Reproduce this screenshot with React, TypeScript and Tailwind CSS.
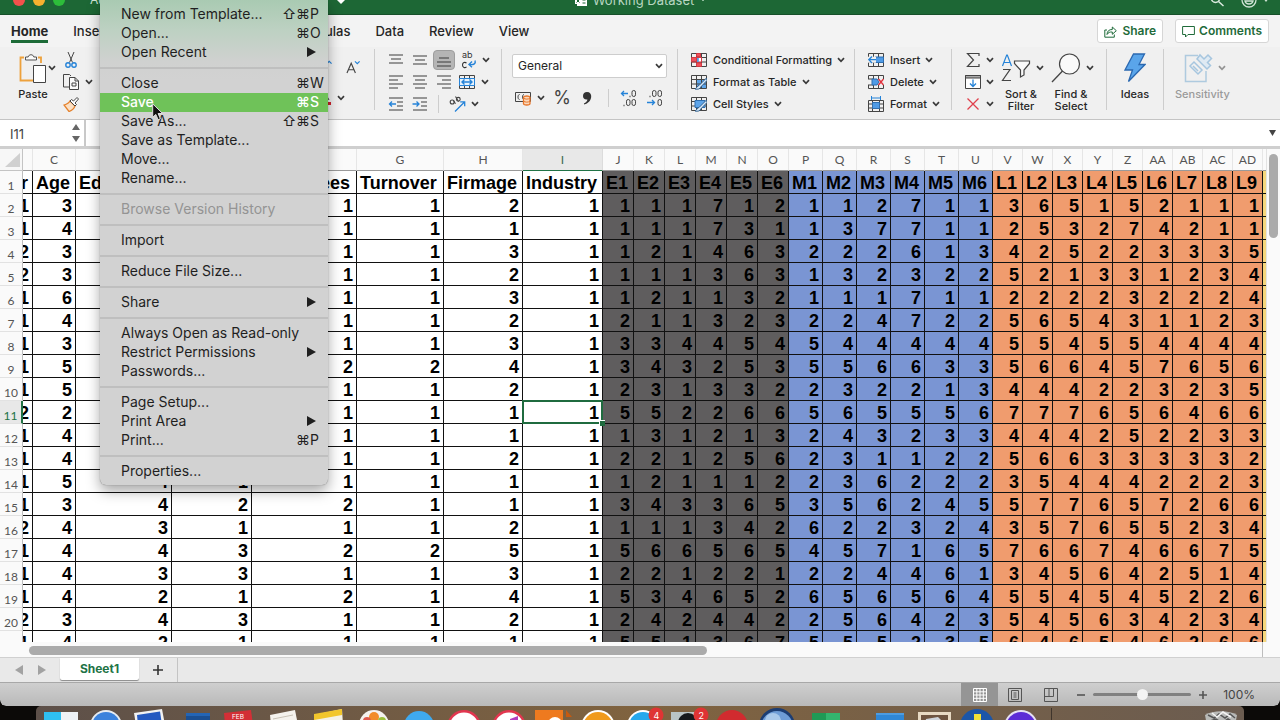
import type { ReactNode } from 'react';

/* ---------- data ---------- */

type Column = { id: string; title: string; width: string; fill: string };

const WHITE = 'bg-white';
const GRAY = 'bg-[#5f5d5e]';
const BLUE = 'bg-[#7a95d3]';
const ORANGE = 'bg-[#f09c6e]';

const columns: Column[] = [
  { id: 'B', title: 'r', width: 'w-[10px]', fill: WHITE },
  { id: 'C', title: 'Age', width: 'w-[43px]', fill: WHITE },
  { id: 'D', title: 'Education', width: 'w-[96px]', fill: WHITE },
  { id: 'E', title: '', width: 'w-[80px]', fill: WHITE },
  { id: 'F', title: 'Employees', width: 'w-[105px]', fill: WHITE },
  { id: 'G', title: 'Turnover', width: 'w-[87px]', fill: WHITE },
  { id: 'H', title: 'Firmage', width: 'w-[79px]', fill: WHITE },
  { id: 'I', title: 'Industry', width: 'w-[80px]', fill: WHITE },
  { id: 'J', title: 'E1', width: 'w-[31px]', fill: GRAY },
  { id: 'K', title: 'E2', width: 'w-[31px]', fill: GRAY },
  { id: 'L', title: 'E3', width: 'w-[31px]', fill: GRAY },
  { id: 'M', title: 'E4', width: 'w-[31px]', fill: GRAY },
  { id: 'N', title: 'E5', width: 'w-[31px]', fill: GRAY },
  { id: 'O', title: 'E6', width: 'w-[31px]', fill: GRAY },
  { id: 'P', title: 'M1', width: 'w-[34px]', fill: BLUE },
  { id: 'Q', title: 'M2', width: 'w-[34px]', fill: BLUE },
  { id: 'R', title: 'M3', width: 'w-[34px]', fill: BLUE },
  { id: 'S', title: 'M4', width: 'w-[34px]', fill: BLUE },
  { id: 'T', title: 'M5', width: 'w-[34px]', fill: BLUE },
  { id: 'U', title: 'M6', width: 'w-[34px]', fill: BLUE },
  { id: 'V', title: 'L1', width: 'w-[30px]', fill: ORANGE },
  { id: 'W', title: 'L2', width: 'w-[30px]', fill: ORANGE },
  { id: 'X', title: 'L3', width: 'w-[30px]', fill: ORANGE },
  { id: 'Y', title: 'L4', width: 'w-[30px]', fill: ORANGE },
  { id: 'Z', title: 'L5', width: 'w-[30px]', fill: ORANGE },
  { id: 'AA', title: 'L6', width: 'w-[30px]', fill: ORANGE },
  { id: 'AB', title: 'L7', width: 'w-[30px]', fill: ORANGE },
  { id: 'AC', title: 'L8', width: 'w-[30px]', fill: ORANGE },
  { id: 'AD', title: 'L9', width: 'w-[30px]', fill: ORANGE },
  { id: '', title: '', width: 'w-[30px]', fill: 'bg-[#f5d77c]' },
];

/* One string per row, columns B to AD; a dot is an empty cell. */
const rows: string[] = [
  '13..1121 111712 112711 365152111',
  '14..1111 111731 137711 253274211',
  '23..1131 121463 222613 425223335',
  '23..1121 111363 132322 521331234',
  '16..1131 121132 111711 222232224',
  '14..1121 211323 224722 565431123',
  '13..1131 334454 544444 554554444',
  '15..2241 343253 556633 566457656',
  '15..1121 231332 232213 444223235',
  '22..1111 552266 565556 777656466',
  '14..1111 131213 243233 444252233',
  '14..1121 221256 231122 566333332',
  '15411111 121112 236222 354442223',
  '13422111 343365 356245 577657266',
  '24311121 111342 622324 357655234',
  '14432251 566565 457165 766746675',
  '14331131 221221 224461 345642514',
  '14212141 534652 656564 554545226',
  '23431121 242442 256423 545634234',
  '14211111 551367 555235 646546266',
];

/* ---------- small pieces ---------- */

function Chevron({ className = '' }: { className?: string }) {
  return (
    <svg viewBox="0 0 8 6" className={`h-[6px] w-[8px] shrink-0 ${className}`} fill="none" stroke="#3a3a3a" strokeWidth="1.7">
      <path d="M1 1.200 4 4.300l3-3.100" />
    </svg>
  );
}

function Icon({ children, className = 'h-4 w-4', box = '0 0 16 16' }: { children: ReactNode; className?: string; box?: string }) {
  return (
    <svg viewBox={box} className={`shrink-0 ${className}`} fill="none" stroke="#444" strokeWidth="1">
      {children}
    </svg>
  );
}

const Divider = () => <div className="h-[61px] w-px shrink-0 bg-[#cdcdcd]" />;

function Lines({ label, d, active }: { label: string; d: string; active?: boolean }) {
  return (
    <button aria-label={label} className={`flex h-5 w-[22px] items-center justify-center ${active ? 'rounded-sm border border-[#9d9d9d] bg-[#b5b5b5]' : ''}`}>
      <Icon>
        <path d={d} stroke="#3c3c3c" strokeWidth="1.2" />
      </Icon>
    </button>
  );
}

function Tool({ icon, label }: { icon: ReactNode; label: string }) {
  return (
    <button className="flex h-[22px] items-center text-[11px] leading-4 font-medium text-[#262626]">
      {icon}
      <span className="mr-[5px] ml-[6px] whitespace-nowrap">{label}</span>
      <Chevron />
    </button>
  );
}

/* ---------- ribbon icons ---------- */

const grid = 'M.5 1.5h15v13h-15zM.5 5.5h15M.5 10h15M5.5 1.5v13M10.5 1.5v13';

const ConditionalIcon = () => (
  <Icon>
    <path d="M5.5 1.5h5v4h-5zM.5 5.5h5V10h-5zM5.5 10h5v4.5h-5z" fill="#f0505a" stroke="none" />
    <path d={grid} />
    <path d="M5.5 5.5h5V10h-5z" fill="#fff" stroke="#d43b45" />
    <path d="M5.5 6h2.3v4H5.5z" fill="#4f9be6" stroke="none" />
    <path d="M.5 5.500h5v4.500h-5zM5.500 1.500h4v3h-4zM5.500 11h5v3.500h-5z" stroke="#d43b45" />
  </Icon>
);
const FormatTableIcon = () => (
  <Icon>
    <path d="M5.500 5.500h10v9h-10z" fill="#5ea5ea" stroke="none" />
    <path d={grid} />
    <path d="M15.500 4 8 11.500c-2 .4-2 2.500-4 3.500 3 .6 5.200 0 5.700-2L16 6.500z" fill="#dcebf9" stroke="#31618f" />
  </Icon>
);
const CellStylesIcon = () => (
  <Icon>
    <path d={grid} />
    <path d="M4 4.500h10v7H4z" fill="#5ea5ea" stroke="#2f6fb0" />
    <path d="M15.500 4 8 11.500c-2 .4-2 2.500-4 3.500 3 .6 5.200 0 5.700-2L16 6.500z" fill="#dcebf9" stroke="#31618f" />
  </Icon>
);
const InsertIcon = () => (
  <Icon>
    <path d={grid} />
    <path d="M7 5h8.500v5.500H7z" fill="#4f9be6" stroke="#2f6fb0" />
    <path d="M0 4.700h8v6H0z" fill="#f1f1f1" stroke="none" />
    <path d="M8 7.700H1M4 4.500.8 7.700 4 11" stroke="#2583d8" strokeWidth="1.300" />
  </Icon>
);
const DeleteIcon = () => (
  <Icon>
    <path d="M.5 5V1.500h15V5M.5 11v3.500h15V11M5.500 1.500V5M10.500 1.500V5M5.500 11v3.500M10.500 11v3.500M0 5h5M0 11h5" />
    <path d="M4 5h5l2 3-2 3H4z" fill="#4f9be6" stroke="#2f6fb0" />
    <path d="m10.500 5 5 6M15.500 5l-5 6" stroke="#e0303c" strokeWidth="1.400" />
  </Icon>
);
const FormatIcon = () => (
  <Icon>
    <path d="M.5 4.500h15v11H.5zM.5 8h15M.5 12h15M4.500 4.500v11M11.500 4.500v11" />
    <path d="M4.500 6.500h7v6h-7z" fill="#4f9be6" stroke="#2f6fb0" />
    <path d="M3.500 0v4M12.500 0v4M3.500 2h9" stroke="#2583d8" />
  </Icon>
);

/* ---------- page sections ---------- */

function TitleBar() {
  return (
    <header className="h-[15px] shrink-0 overflow-hidden border-b border-[#17502a] bg-[#1d6735]">
      <div className="-mt-[13px] flex h-[25px] items-center text-white">
        <div className="flex flex-1 items-center">
          <span className="ml-[13px] h-3 w-3 rounded-full bg-[#f4514c]" />
          <span className="ml-2 h-3 w-3 rounded-full bg-[#f6b12f]" />
          <span className="ml-2 h-3 w-3 rounded-full bg-[#2dbd3a]" />
          <span className="ml-[25px] text-[12px] leading-4 text-[#cfe3d5]">AutoSave</span>
          <svg viewBox="0 0 8 8" className="mr-[218px] ml-auto h-2 w-2" fill="#fff">
            <path d="M4 0 8 4 4 8 0 4z" />
          </svg>
        </div>
        <div className="flex items-center gap-[6px] pl-3 text-[13px] leading-4 text-[#b8d6c1]">
          <svg viewBox="0 0 12 12" className="h-3 w-3" fill="#fff">
            <path d="M2 0h7l3 3v9H2z" />
            <path d="M0 4h6v6H0z" />
            <path d="m1.500 5.500 3 3m0-3-3 3M7.500 6h3M7.500 9h3" stroke="#1d6735" />
          </svg>
          <span>Working Dataset</span>
          <svg viewBox="0 0 6 4" className="h-1 w-[6px]" fill="none" stroke="#8fbd9d">
            <path d="m.5.500 2.500 2.500L5.500.5" />
          </svg>
        </div>
        <div className="flex flex-1 items-center justify-end gap-[17px] pr-[11px]">
          <svg viewBox="0 0 14 14" className="h-[14px] w-[14px]" fill="none" stroke="#dcebe0" strokeWidth="1.500">
            <circle cx="5.500" cy="5.500" r="4" />
            <path d="m8.500 8.500 5 4.500" />
          </svg>
          <div className="flex items-center gap-[6px]">
            <svg viewBox="0 0 16 16" className="h-4 w-4" fill="none" stroke="#cfe3d5" strokeWidth="1.300">
              <circle cx="8" cy="8" r="7" />
              <path d="M4 9c1 4 7 4 8 0z" />
            </svg>
            <svg viewBox="0 0 6 4" className="h-1 w-[6px]" fill="#cfe3d5">
              <path d="M0 0h6L3 4z" />
            </svg>
          </div>
        </div>
      </div>
    </header>
  );
}

const tabs = ['Home', 'Insert', 'Draw', 'Page Layout', 'Formulas', 'Data', 'Review', 'View'];

function TabRow() {
  return (
    <div className="flex h-8 shrink-0 items-center justify-between bg-[#f3f3f3] pr-[11px] pl-[11px]">
      <nav className="flex gap-[25px]">
        {tabs.map((t, i) => (
          <button
            key={t}
            className={`h-6 border-b-[3px] pt-[3px] text-[13px] leading-4 whitespace-nowrap text-[#262626] ${
              i === 0 ? 'border-[#1d6b38] font-bold' : 'border-transparent font-medium'
            }`}
          >
            {t}
          </button>
        ))}
      </nav>
      <div className="flex gap-3 text-[12px] leading-4 font-semibold text-[#1f6b3a]">
        <button className="flex h-6 items-center gap-[5px] rounded-[3px] border border-[#d6d6d6] bg-white px-[6px]">
          <Icon className="h-[13px] w-[13px]" box="0 0 13 13">
            <path d="M3 5H.8v7.200h9.500V9.500M3 9.500c.2-3.500 2-5 5.300-5V2l4 3.700-4 3.600V7C5.800 6.800 4.200 7.500 3 9.500z" stroke="#1f6b3a" />
          </Icon>
          Share
        </button>
        <button className="flex h-6 items-center gap-1 rounded-[3px] border border-[#d6d6d6] bg-white px-[6px]">
          <Icon className="h-[13px] w-[13px]" box="0 0 13 13">
            <path d="M.6 1.500h11.800v8H6L3.500 12V9.500H.6z" stroke="#1f6b3a" />
          </Icon>
          Comments
        </button>
      </div>
    </div>
  );
}

function Ribbon() {
  return (
    <div className="flex h-[73px] shrink-0 items-start border-b border-[#c4c4c4] bg-[#f0f0f0] pt-[2px]">
      <div className="flex w-[374px] shrink-0 items-start">
        <button className="ml-[13px] flex w-10 flex-col items-center pt-[4px] text-[11px] leading-4 font-medium text-[#262626]">
          <Icon className="h-8 w-7" box="0 0 28 32">
            <path d="M5 4.500H1.500v23H14M19 4.500h3V10" stroke="#eda13c" strokeWidth="1.800" />
            <path d="M6.500 7V4h2.700c.3-3 5.300-3 5.600 0h2.700v3z" fill="#fafafa" stroke="#555" />
            <path d="M14.500 12.500h12v17h-12z" fill="#fff" />
          </Icon>
          <span className="mt-[1px]">Paste</span>
        </button>
        <Chevron className="mt-4 -ml-[5px]" />
        <div className="ml-[7px] flex flex-col">
          <button aria-label="Cut" className="flex h-[22px] items-center">
            <Icon>
              <path d="M5 0 9.500 10.500M11 0 6.500 10.500" />
              <circle cx="5" cy="13" r="2.200" stroke="#2583d8" strokeWidth="1.400" />
              <circle cx="11" cy="13" r="2.200" stroke="#2583d8" strokeWidth="1.400" />
            </Icon>
          </button>
          <button aria-label="Copy" className="flex h-[22px] items-center gap-[6px]">
            <Icon>
              <path d="M6 13H.5V.5h6L8 2" />
              <path d="M6.500 3.500H12L15.500 7v8.500h-9z" fill="#fafafa" />
              <path d="M12 3.500V7h3.500M9 9h4v3H9z" />
            </Icon>
            <Chevron />
          </button>
          <button aria-label="Format painter" className="flex h-[22px] items-center">
            <Icon>
              <path d="M1 9c3-1 5-2 6-4l5 5c-1 2.500-3 4.500-6 5.500z" fill="#fbe0c4" stroke="#e5822d" strokeWidth="1.300" />
              <path d="m7 5 1.500-1.500 2 1.500L14 1.500 15.500 3 12 7l1.500 1.500L12 10z" fill="#fff" />
            </Icon>
          </button>
        </div>
        <div className="ml-auto flex w-[57px] flex-col">
          <div className="flex h-[34px] items-center gap-[13px]">
            <button aria-label="Increase font size">
              <Icon className="h-[15px] w-4">
                <path d="M.5 15 5 4.500 9.500 15M2 11.500h6" />
                <path d="m10 5 2.500-2.500L15 5" stroke="#2583d8" strokeWidth="1.300" />
              </Icon>
            </button>
            <button aria-label="Decrease font size">
              <Icon className="h-[15px] w-4">
                <path d="M.5 15 5 4.500 9.500 15M2 11.500h6" strokeWidth="1.200" />
                <path d="M9 2.500 11.500 5 14 2.500" stroke="#2583d8" strokeWidth="1.300" />
              </Icon>
            </button>
          </div>
          <button aria-label="Font color" className="flex h-[30px] items-center">
            <Icon className="mr-[6px] h-[14px] w-[14px]" box="0 0 14 14">
              <path d="M2 9 7 0l5 9" />
              <path d="M0 11h14v3H0z" fill="#d0202c" stroke="none" />
            </Icon>
            <Chevron />
          </button>
        </div>
      </div>
      <Divider />
      <div className="flex w-[126px] shrink-0 flex-col pl-[10px]">
        <div className="flex h-[22px] items-center gap-[2px]">
          <Lines label="Align top" d="M1 3h14M3 7h10M1 11h14" />
          <Lines label="Align middle" d="M1 4h14M3 8h10M1 12h14" />
          <Lines label="Align bottom" d="M3 6h10M1 10h14M1 14h14" active />
          <button aria-label="Wrap text" className="ml-1 flex items-center gap-[5px]">
            <Icon className="h-5 w-4" box="0 0 16 20">
              <text x="1" y="8" fontSize="9" fontFamily="Inter, sans-serif" fill="#333" stroke="none">ab</text>
              <path d="M5.500 13.200c-1.500-1.500-4-.8-4 1.800s2.500 3.300 4 1.800" stroke="#333" strokeWidth="1.100" />
              <path d="M14 10.500c1 3-1 4.500-5.500 4M11 11.500 8 14.500l3 2.700" stroke="#2583d8" strokeWidth="1.400" />
            </Icon>
            <Chevron />
          </button>
        </div>
        <div className="flex h-[22px] items-center gap-[2px]">
          <Lines label="Align left" d="M1 2h14M1 6h9M1 10h14M1 14h9" />
          <Lines label="Align center" d="M1 2h14M3 6h10M1 10h14M3 14h10" />
          <Lines label="Align right" d="M1 2h14M6 6h9M1 10h14M6 14h9" />
          <button aria-label="Merge" className="ml-[2px] flex items-center gap-[6px]">
            <Icon>
              <path d="M.5 1.500h15v13H.5zM5.500 1.500v3M10.500 1.500v3M5.500 11.500v3M10.500 11.500v3" />
              <path d="M.5 4.500h15v7H.5z" fill="#e6f2fd" stroke="#2583d8" />
              <path d="M3 8h10M5.500 5.500 3 8l2.500 2.500M10.500 5.500 13 8l-2.500 2.500" stroke="#2583d8" strokeWidth="1.400" />
            </Icon>
            <Chevron />
          </button>
        </div>
        <div className="flex h-[22px] items-center gap-[2px]">
          <button aria-label="Decrease indent" className="flex h-5 w-[22px] items-center justify-center">
            <Icon>
              <path d="M1 2h14M9 6h6M9 10h6M1 14h14" stroke="#3c3c3c" />
              <path d="M8 8H1.500M4 5.500 1.500 8 4 10.500" stroke="#2583d8" strokeWidth="1.300" />
            </Icon>
          </button>
          <button aria-label="Increase indent" className="flex h-5 w-[22px] items-center justify-center">
            <Icon>
              <path d="M1 2h14M9 6h6M9 10h6M1 14h14" stroke="#3c3c3c" />
              <path d="M.5 8H7M4.500 5.500 7 8l-2.500 2.500" stroke="#2583d8" strokeWidth="1.300" />
            </Icon>
          </button>
          <span className="mx-[5px] h-[18px] w-px bg-[#cdcdcd]" />
          <button aria-label="Orientation" className="ml-[3px] flex items-center gap-[5px]">
            <Icon className="h-4 w-[17px]" box="0 0 17 16">
              <circle cx="3.200" cy="6" r="2" stroke="#444" strokeWidth="1.100" />
              <path d="m4.300 4.200 2.200 3.600M6.500.5l3 5" stroke="#444" strokeWidth="1.100" />
              <circle cx="9.300" cy="3.300" r="1.900" stroke="#444" strokeWidth="1.100" />
              <path d="M6 15.500 15.500 6M11.200 5.800h4.500v4.500" stroke="#2583d8" strokeWidth="1.300" />
            </Icon>
            <Chevron />
          </button>
        </div>
      </div>
      <Divider />
      <div className="flex w-[175px] shrink-0 flex-col px-[10px] pt-[5px]">
        <div className="grid h-6 items-center">
          <select aria-label="Number format" className="col-start-1 row-start-1 h-6 w-full appearance-none rounded-[2px] border border-[#cdcdcd] bg-white pl-[5px] text-[12px] leading-4 text-[#262626]">
            <option>General</option>
          </select>
          <Chevron className="pointer-events-none col-start-1 row-start-1 mr-[4px] justify-self-end" />
        </div>
        <div className="mt-[10px] flex h-5 items-center pl-[3px]">
          <button aria-label="Currency" className="flex items-center gap-[6px]">
            <Icon>
              <path d="M.5 2.500h15v9H.5zM4.500 4.500c-2 0-2 5 0 5M9 4.500c-2 0-2 5 0 5" />
              <path d="M8.500 7.500v6c0 2 6.500 2 6.500 0v-6c0-2-6.500-2-6.500 0z" fill="#fbd9bd" stroke="#e8772c" strokeWidth="1.300" />
              <path d="M8.500 8c1.500 1.500 5 1.500 6.500 0M8.500 11c1.500 1.500 5 1.500 6.500 0" stroke="#e8772c" />
            </Icon>
            <Chevron />
          </button>
          <button className="ml-[7px] w-5 text-center text-[18px] leading-5 text-[#444]">%</button>
          <button aria-label="Comma style" className="ml-[10px]">
            <svg viewBox="0 0 10 14" className="h-[14px] w-[10px]" fill="#333">
              <path d="M5 1c3 0 4.500 2 4.200 5-.4 3.500-3 6.500-7 7.500l-.3-1c2-.9 3.400-2.500 3.500-4C2.700 9 1 7.500 1 5s1.700-4 4-4z" />
            </svg>
          </button>
          <span className="mx-4 h-[18px] w-px bg-[#cdcdcd]" />
          <button aria-label="Increase decimal" className="-ml-[5px]">
            <Icon className="h-[18px] w-[18px]" box="0 0 18 18">
              <path d="M8 4.500H1.500M4 2 1.500 4.500 4 7" stroke="#2583d8" strokeWidth="1.300" />
              <rect x="12" y="1.500" width="3.500" height="6" rx="1.700" />
              <rect x="6.500" y="10.500" width="3.500" height="6" rx="1.700" />
              <rect x="12" y="10.500" width="3.500" height="6" rx="1.700" />
              <path d="M9.500 7.500h1M3.500 16.500h1" strokeWidth="1.300" />
            </Icon>
          </button>
          <button aria-label="Decrease decimal" className="ml-2">
            <Icon className="h-[18px] w-[18px]" box="0 0 18 18">
              <path d="M1 13.500h7.500M6 11l2.500 2.500L6 16" stroke="#2583d8" strokeWidth="1.300" />
              <rect x="6.500" y="1.500" width="3.500" height="6" rx="1.700" />
              <rect x="12" y="1.500" width="3.500" height="6" rx="1.700" />
              <rect x="12" y="10.500" width="3.500" height="6" rx="1.700" />
              <path d="M3.500 7.500h1" strokeWidth="1.300" />
            </Icon>
          </button>
        </div>
      </div>
      <Divider />
      <div className="flex w-[176px] shrink-0 flex-col items-start pl-[13px]">
        <Tool icon={<ConditionalIcon />} label="Conditional Formatting" />
        <Tool icon={<FormatTableIcon />} label="Format as Table" />
        <Tool icon={<CellStylesIcon />} label="Cell Styles" />
      </div>
      <Divider />
      <div className="flex w-[96px] shrink-0 flex-col items-start pl-[13px]">
        <Tool icon={<InsertIcon />} label="Insert" />
        <Tool icon={<DeleteIcon />} label="Delete" />
        <Tool icon={<FormatIcon />} label="Format" />
      </div>
      <Divider />
      <div className="flex w-[154px] shrink-0 items-start pl-[13px]">
        <div className="flex flex-col">
          <button aria-label="AutoSum" className="flex h-[22px] items-center gap-[5px]">
            <Icon>
              <path d="M14 4V1.500H2.500L8.500 8l-6 6.500H14V12" strokeWidth="1.200" />
            </Icon>
            <Chevron />
          </button>
          <button aria-label="Fill" className="flex h-[22px] items-center gap-[5px]">
            <Icon>
              <path d="M.5 1.500h15v13H.5z" fill="#fff" />
              <path d="M.5 1.500h15v2.500H.5z" fill="#aaa" />
              <path d="M8 5.500V12M5 9.500 8 12.500l3-3" stroke="#2583d8" strokeWidth="1.300" />
            </Icon>
            <Chevron />
          </button>
          <button aria-label="Clear" className="flex h-[22px] items-center gap-[5px]">
            <Icon>
              <path d="m2.500 2.500 11 11M13.500 2.500l-11 11" stroke="#e0404c" strokeWidth="1.300" />
            </Icon>
            <Chevron />
          </button>
        </div>
        <button className="ml-[7px] flex w-[50px] flex-col pt-[4px] text-[11px] leading-3 font-medium text-[#262626]">
          <span className="flex items-center gap-[5px]">
            <Icon className="h-[30px] w-[30px]" box="0 0 30 30">
              <path d="m1.500 13 4.200-11h.6l4.200 11M3 9.500h6" stroke="#2583d8" strokeWidth="1.200" />
              <path d="M2 16.500h7L1.500 27.500H10" strokeWidth="1.200" />
              <path d="M13.500 8h15v2.500L23 17v5l-3.500 2v-7l-6-6.500z" fill="#fafafa" strokeWidth="1.200" />
            </Icon>
            <Chevron />
          </span>
          <span className="mt-[5px] w-10 text-center">Sort &amp; Filter</span>
        </button>
        <button className="flex w-[48px] flex-col pt-[4px] text-[11px] leading-3 font-medium text-[#262626]">
          <span className="flex items-center gap-[5px]">
            <Icon className="h-[30px] w-[30px]" box="0 0 30 30">
              <circle cx="18.500" cy="11" r="10" fill="#fafafa" strokeWidth="1.200" />
              <path d="m11.500 18-10.500 11" strokeWidth="1.300" />
            </Icon>
            <Chevron />
          </span>
          <span className="mt-[5px] w-10 text-center">Find &amp; Select</span>
        </button>
      </div>
      <Divider />
      <div className="flex w-[56px] shrink-0 flex-col items-center">
        <button className="flex flex-col items-center pt-[4px] text-[11px] leading-3 font-medium text-[#262626]">
          <Icon className="h-[30px] w-[22px]" box="0 0 22 30">
            <path d="M9.500 1h11L15 11.500h6L4.500 28.500l4-11.500H1z" fill="#5aa5ea" stroke="#2b68b0" strokeWidth="1.300" />
          </Icon>
          <span className="mt-[5px]">Ideas</span>
        </button>
      </div>
      <Divider />
      <div className="flex flex-1 items-start pl-[11px] opacity-50">
        <button className="flex flex-col items-center pt-[4px] text-[11px] leading-3 font-medium text-[#444]">
          <span className="flex items-center gap-[5px] pl-1">
            <Icon className="h-[30px] w-[30px]" box="0 0 30 30">
              <path d="M15 2.500H2.500v26H23V18" stroke="#6fa6cf" strokeWidth="1.500" />
              <path d="m7 13 4-4 8 8-4 4zM10 13l5 5" stroke="#5f9ed0" strokeWidth="1.500" />
              <path d="m14 6 3-4 4 4 4-4 3.500 3.500-4 4 3 3-3.500 3.500z" fill="#cfe5f7" stroke="#5f9ed0" strokeWidth="1.500" />
            </Icon>
            <Chevron />
          </span>
          <span className="mt-[5px]">Sensitivity</span>
        </button>
      </div>
    </div>
  );
}

function FormulaBar() {
  return (
    <div className="flex h-[29px] shrink-0 border-b-[3px] border-[#cfcfcf] bg-white">
      <div className="flex w-[86px] shrink-0 items-center border-r-2 border-[#c9c9c9]">
        <input aria-label="Name box" defaultValue="I11" className="w-[60px] bg-transparent pt-px pl-[10px] text-[13px] leading-4 text-[#444] outline-none" />
        <svg viewBox="0 0 8 18" className="mr-1 ml-auto h-[18px] w-2" fill="#666">
          <path d="M0 6h8L4 0zM0 12h8l-4 6z" />
        </svg>
      </div>
      <input aria-label="Formula" className="min-w-0 flex-1 bg-transparent px-2 text-[12px] outline-none" />
      <button aria-label="Expand formula bar" className="w-4">
        <svg viewBox="0 0 7 6" className="mx-auto h-[6px] w-[7px]" fill="#444">
          <path d="M0 0h7L3.500 6z" />
        </svg>
      </button>
    </div>
  );
}

function Sheet() {
  return (
    <div className="flex min-h-0 min-w-0 flex-1 bg-[#fbfbfb]">
      <div className="min-w-0 flex-1 overflow-hidden">
        <table className="w-[1293px] table-fixed border-separate border-spacing-0">
          <colgroup>
            <col className="w-[23px]" />
            {columns.map((c) => (
              <col key={c.id} className={c.width} />
            ))}
          </colgroup>
          <thead>
            <tr className="h-[22px] font-[Lato,sans-serif] text-[12px] leading-4 text-[#555]">
              <th className="border-r border-b border-[#c4c4c4] bg-[#f7f7f7] p-0">
                <svg viewBox="0 0 15 14" className="mr-[2px] ml-auto h-[14px] w-[15px]" fill="#d0d0d0">
                  <path d="M15 0v14H0z" />
                </svg>
              </th>
              {columns.map((c) => (
                <th
                  key={c.id}
                  scope="col"
                  className={`border-r border-b p-0 font-normal ${
                    c.id === 'I' ? 'border-r-[#dcdcdc] border-b-[#217346] bg-[#e8e8e8] text-[#3c6b50]' : 'border-r-[#e6e6e6] border-b-[#9a9a9a] bg-[#fafafa]'
                  }`}
                >
                  {c.id === 'B' ? '' : c.id}
                </th>
              ))}
            </tr>
          </thead>
          <tbody className="text-[18px] leading-5 font-bold text-black">
            <tr className="h-[23px]">
              <RowNumber n={1} />
              {columns.map((c) => (
                <td key={c.id} className={`overflow-hidden border-r border-b border-[#111] p-0 pt-[2px] whitespace-nowrap ${c.fill}`}>
                  {c.id === 'B' ? <div className="flex justify-end pr-[4px]">{c.title}</div> : <div className="pl-[3px]">{c.title}</div>}
                </td>
              ))}
            </tr>
            {rows.map((row, r) => {
              const cells = row.replace(/ /g, '');
              return (
                <tr key={r} className="h-[23px]">
                  <RowNumber n={r + 2} />
                  {columns.map((c, i) => {
                    const value = cells[i] === '.' ? '' : cells[i];
                    const selected = c.id === 'I' && r === 9;
                    return (
                      <td key={c.id} className={`border-r border-b border-[#111] p-0 pt-[2px] ${c.fill} ${selected ? 'relative' : 'overflow-hidden'}`}>
                        <div className="flex justify-end pr-[3px]">{value}</div>
                        {selected && (
                          <>
                            <span className="absolute -inset-px border-2 border-[#1f6b3f]" />
                            <span className="absolute -right-[3px] -bottom-[3px] h-[6px] w-[6px] border-t border-l border-white bg-[#1f6b3f]" />
                          </>
                        )}
                      </td>
                    );
                  })}
                </tr>
              );
            })}
          </tbody>
        </table>
      </div>
      <div className="w-[14px] shrink-0 border-l border-[#e2e2e2] bg-[#fafafa] pt-[5px]">
        <div className="mx-auto h-[84px] w-[9px] rounded-full bg-[#ababab]" />
      </div>
    </div>
  );
}

function RowNumber({ n }: { n: number }) {
  const active = n === 11;
  return (
    <th
      scope="row"
      className={`border-r border-b border-b-[#e2e2e2] p-0 text-center align-bottom font-[Lato,sans-serif] text-[12px] leading-[15px] font-normal lining-nums ${
        active ? 'border-r-2 border-r-[#217346] bg-[#e8e8e8] text-[#217346]' : 'border-r-[#bdbdbd] bg-[#fafafa] text-[#555]'
      }`}
    >
      {n}
    </th>
  );
}

function BottomBars() {
  return (
    <>
      <div className="flex h-[15px] shrink-0 bg-[#fafafa] pr-[17px]">
        <div className="flex flex-1 items-center border-r border-[#bdbdbd] pt-px pl-[29px]">
          <div className="h-[9px] w-[55%] rounded-full bg-[#ababab]" />
        </div>
      </div>
      <div className="flex h-[26px] shrink-0 items-start border-t border-b border-t-[#d0d0d0] border-b-[#a8a8a8] bg-[#e9e9e9]">
        <div className="flex w-[60px] items-center gap-[15px] self-center pl-[15px]">
          <svg viewBox="0 0 8 10" className="h-[10px] w-2" fill="#a2a2a2"><path d="M8 0v10L0 5z" /></svg>
          <svg viewBox="0 0 8 10" className="h-[10px] w-2" fill="#a2a2a2"><path d="M0 0v10l8-5z" /></svg>
        </div>
        <button className="h-[22px] w-[79px] rounded-b-[2px] bg-white text-[12px] leading-4 font-bold text-[#217346] shadow-[0_1px_1px_#8a8a8a]">Sheet1</button>
        <button aria-label="Add sheet" className="flex h-[24px] w-[39px] items-center justify-center border-r border-[#c4c4c4]">
          <svg viewBox="0 0 10 10" className="h-[10px] w-[10px]" stroke="#333" strokeWidth="1.600"><path d="M5 0v10M0 5h10" /></svg>
        </button>
      </div>
      <div className="flex h-[23px] shrink-0 items-center justify-end rounded-b-[6px] bg-linear-to-b from-[#cfcfcf] to-[#b9b9b9] pr-[25px] text-[12px] leading-4 text-[#444]">
        <button aria-label="Normal view" className="flex h-full w-[37px] items-center justify-center bg-[#959595]">
          <svg viewBox="0 0 14 14" className="h-[14px] w-[14px]" fill="none" stroke="#fff"><path d="M.5.5h13v13H.5zM.5 3.800h13M.5 7h13M.5 10.300h13M3.800.5v13M7 .5v13M10.300.5v13" /></svg>
        </button>
        <button aria-label="Page layout view" className="ml-[10px]">
          <svg viewBox="0 0 14 14" className="h-[14px] w-[14px]" fill="none" stroke="#555"><path d="M.5.500h13v13H.5zM3.500 2.500h7v9h-7zM5.500 5h3M5.500 7h3M5.500 9h3" /></svg>
        </button>
        <button aria-label="Page break view" className="ml-[22px]">
          <svg viewBox="0 0 14 14" className="h-[14px] w-[14px]" fill="none" stroke="#555"><path d="M.5.500h13v13H.5zM.5 8.500h9v-8M5 .5v8" /></svg>
        </button>
        <button aria-label="Zoom out" className="ml-[19px]">
          <svg viewBox="0 0 8 8" className="h-2 w-2" stroke="#555" strokeWidth="1.600"><path d="M0 4h8" /></svg>
        </button>
        <input
          type="range"
          aria-label="Zoom"
          min={0}
          max={100}
          defaultValue={50}
          className="mx-2 h-[11px] w-[98px] appearance-none bg-transparent [&::-webkit-slider-runnable-track]:h-[3px] [&::-webkit-slider-runnable-track]:rounded-full [&::-webkit-slider-runnable-track]:bg-[#808080] [&::-webkit-slider-thumb]:-mt-1 [&::-webkit-slider-thumb]:h-[11px] [&::-webkit-slider-thumb]:w-[11px] [&::-webkit-slider-thumb]:appearance-none [&::-webkit-slider-thumb]:rounded-full [&::-webkit-slider-thumb]:bg-[#f4f4f4]"
        />
        <button aria-label="Zoom in">
          <svg viewBox="0 0 8 8" className="h-2 w-2" stroke="#555" strokeWidth="1.600"><path d="M0 4h8M4 0v8" /></svg>
        </button>
        <span className="ml-4">100%</span>
      </div>
    </>
  );
}

/* ---------- dock ---------- */

const dockMain: [string, ReactNode][] = [
  ['Finder', <><path d="M1 3h17v13H1z" fill="#2fc0f2" /><path d="M18 3h17v13H18z" fill="#eef2f6" /></>],
  ['Safari', <><circle cx="18" cy="17" r="16" fill="#e8edf2" /><circle cx="18" cy="17" r="14" fill="#3b82dc" /></>],
  ['Mail', <><path d="m1 4 28-4 3 16H3z" fill="#f2f2f2" /><path d="m4 6 23-3.500L29 16H5z" fill="#2459c0" /></>],
  ['Drive', <><path d="M9 5h24v11H9z" fill="#1b4f92" /><path d="M9 4h24v3H9z" fill="#2465b5" /></>],
  ['Calendar', <><path d="M2 4 29 1l2 15H3z" fill="#d32f36" /><text x="10" y="9.500" fontSize="6.500" fill="#fff" fontFamily="Inter, sans-serif">FEB</text></>],
  ['Reminders', <><path d="m3 6 25-5 3 15H4z" fill="#f5f2ec" /><path d="m6 10 20-4" stroke="#c9c2b6" /></>],
  ['Notes', <><path d="m2 6 28-6 1 16H2z" fill="#f4f1e6" /><path d="m2 5 28-5v6L2 11z" fill="#f2c62c" /></>],
  ['Photos', <><circle cx="18" cy="16" r="15" fill="#f5f2ee" /><circle cx="18" cy="8" r="5" fill="#f28c28" /><circle cx="11" cy="12" r="4" fill="#e05a4d" /><circle cx="26" cy="12" r="4" fill="#9bc13c" /></>],
  ['Messages', <circle cx="18" cy="17" r="15" fill="#3fa9ee" />],
  ['News', <><circle cx="18" cy="18" r="17" fill="#e2364f" /><circle cx="18" cy="18" r="14.500" fill="#fff" /></>],
  ['Music', <><circle cx="18" cy="18" r="17" fill="#e2364f" /><circle cx="18" cy="18" r="14.500" fill="#fff" /><path d="m19 10 8-3v4l-8 3z" fill="#b23cc0" /></>],
  ['Books', <><path d="M0 1h28v15H0z" fill="#ee7a1f" /><path d="m31 1 6 7h-6z" fill="#c65a10" /><circle cx="20" cy="15" r="7" fill="#fff" /></>],
  ['Pages', <><circle cx="18" cy="18" r="17" fill="#fff" /><circle cx="18" cy="18" r="15" fill="#f09a1c" /></>],
  ['App Store', <><circle cx="18" cy="17" r="16" fill="#fff" /><circle cx="18" cy="17" r="14" fill="#25a8ec" /><circle cx="31" cy="6" r="7.500" fill="#df3434" /><text x="28.500" y="10" fontSize="9" fill="#fff" fontFamily="Inter, sans-serif">4</text></>],
  ['Activity', <><path d="M1 3h34v13H1z" fill="#b9c4c6" /><circle cx="18" cy="14" r="10" fill="#15191c" /><circle cx="31" cy="6" r="7.500" fill="#df3434" /><text x="28.500" y="10" fontSize="9" fill="#fff" fontFamily="Inter, sans-serif">2</text></>],
  ['Opera', <circle cx="18" cy="17" r="16" fill="#d12b2f" />],
  ['Browser', <><circle cx="18" cy="17" r="18" fill="#1c3d73" /><circle cx="18" cy="18" r="16" fill="#6e9cd6" /><circle cx="14" cy="12" r="8" fill="#a9c8ea" /></>],
];

const dockMore: [string, ReactNode][] = [
  ['Files', <><path d="M4 4h28v12H4z" fill="#2f87d6" /><path d="M4 4h28v2H4z" fill="#4c9ce2" /></>],
  ['Preview', <><path d="M2 3h33v13H2z" fill="#e7d9c3" /><path d="M5 6h27v10H5z" fill="#6e5440" /><path d="m10 10 12-2 8 8H9z" fill="#cfd4da" /></>],
  ['Chart', <><circle cx="18" cy="17" r="17" fill="#1c56a8" /><path d="M15 5h7v11h-7z" fill="#f1e13a" /></>],
  ['Podcasts', <><circle cx="18" cy="18" r="17" fill="#e6e0f4" /><circle cx="18" cy="18" r="15" fill="#5c2bd6" /></>],
];

function DockIcon({ name, art }: { name: string; art: ReactNode }) {
  return (
    <button aria-label={name} className="h-4 w-9 shrink-0">
      <svg viewBox="0 0 36 16" className="h-4 w-9 overflow-visible">{art}</svg>
    </button>
  );
}

function Dock() {
  return (
    <div className="h-[14px] shrink-0 overflow-hidden px-9">
      <div className="flex h-4 items-start rounded-t-[5px] bg-linear-to-r from-[#5d5049] via-[#80633f] to-[#6b5c50] pt-[2px]">
        <div className="ml-[7px] flex w-[752px] shrink-0 justify-between pt-px">
          {dockMain.map(([name, art]) => (
            <DockIcon key={name} name={name} art={art} />
          ))}
        </div>
        <div className="ml-[13px] flex shrink-0 pt-px">
          <DockIcon name="Sheets" art={<><path d="M4 4h28v12H4z" fill="#1f9a55" /><path d="M18 4h14v12H18z" fill="#33b56e" /></>} />
        </div>
        <div className="ml-7 flex w-[167px] shrink-0 justify-between pt-px">
          {dockMore.map(([name, art]) => (
            <DockIcon key={name} name={name} art={art} />
          ))}
        </div>
        <span className="ml-3 h-4 w-px bg-[#3f352c]" />
        <div className="mr-[5px] ml-auto">
          <DockIcon name="Trash" art={<><path d="M2 5c8-5 24-5 32 0l-2 11H4z" fill="#b9bab8" /><path d="m5 5 6 3 5-4 6 4 5-4 5 4M7 11l6-2 6 4 6-4 5 3" stroke="#555" strokeWidth="1.500" fill="none" /><path d="m9 3 5 4 6-5 8 5" stroke="#f4f4f4" strokeWidth="1.500" fill="none" /></>} />
        </div>
      </div>
    </div>
  );
}

/* ---------- file menu ---------- */

type Item = { label: string; keys?: [string, string]; more?: boolean; state?: 'active' | 'disabled' };

const menu: Item[][] = [
  [
    { label: 'New from Template...', keys: ['⇧', 'P'] },
    { label: 'Open...', keys: ['', 'O'] },
    { label: 'Open Recent', more: true },
  ],
  [
    { label: 'Close', keys: ['', 'W'] },
    { label: 'Save', keys: ['', 'S'], state: 'active' },
    { label: 'Save As...', keys: ['⇧', 'S'] },
    { label: 'Save as Template...' },
    { label: 'Move...' },
    { label: 'Rename...' },
  ],
  [{ label: 'Browse Version History', state: 'disabled' }],
  [{ label: 'Import' }],
  [{ label: 'Reduce File Size...' }],
  [{ label: 'Share', more: true }],
  [{ label: 'Always Open as Read-only' }, { label: 'Restrict Permissions', more: true }, { label: 'Passwords...' }],
  [{ label: 'Page Setup...' }, { label: 'Print Area', more: true }, { label: 'Print...', keys: ['', 'P'] }],
  [{ label: 'Properties...' }],
];

function FileMenu() {
  return (
    <div
      role="menu"
      className="absolute top-0 left-[100px] w-[228px] rounded-b-[6px] bg-[#d2d2d2] bg-[linear-gradient(to_bottom,#a9cab2_0px,#bdd1c2_30px,#d0d1d0_62px,#d2d2d2_80px)] pt-[5px] pb-1 text-[14px] leading-[17px] text-[#1f1f1f] shadow-[0_6px_14px_rgba(0,0,0,0.35),0_0_1px_rgba(0,0,0,0.5)]"
    >
      {menu.map((section, s) => (
        <div key={s} role="group">
          {s > 0 && (
            <div className="flex h-3 items-center">
              <div className="h-[2px] w-full bg-[#bfbfbf]" />
            </div>
          )}
          {section.map((item) => (
            <button
              key={item.label}
              role="menuitem"
              className={`flex h-[19px] w-full items-center pb-[2px] pl-[21px] text-left whitespace-nowrap ${
                item.state === 'active' ? 'bg-[#6fc259] font-medium text-white' : item.state === 'disabled' ? 'text-[#949494]' : ''
              }`}
            >
              {item.label}
              {item.keys && (
                <span className="ml-auto grid w-[46px] grid-cols-[14px_14px_auto]">
                  <span>{item.keys[0]}</span>
                  <span>⌘</span>
                  <span>{item.keys[1]}</span>
                </span>
              )}
              {item.more && (
                <svg viewBox="0 0 9 10" className="mr-3 ml-auto h-[10px] w-[9px]" fill="#1f1f1f">
                  <path d="M0 0v10l9-5z" />
                </svg>
              )}
            </button>
          ))}
        </div>
      ))}
      <svg viewBox="0 0 12 18" className="absolute top-[103px] left-[52px] h-[18px] w-3" fill="#111" stroke="#ddd" strokeWidth="1">
        <path d="M.7.8v13.500l3.100-2.900 2.300 5.300 2.300-1-2.300-5.200h4.500z" />
      </svg>
    </div>
  );
}

export default function App() {
  return (
    <div className="relative flex h-screen flex-col overflow-hidden bg-[#0c0a08] font-[Inter,'Noto_Sans',sans-serif]">
      <div className="flex min-h-0 flex-1 flex-col overflow-hidden rounded-b-[6px]">
        <TitleBar />
        <TabRow />
        <Ribbon />
        <FormulaBar />
        <div className="flex min-h-0 flex-1 font-['Liberation_Sans',Arial,sans-serif]">
          <Sheet />
        </div>
        <BottomBars />
      </div>
      <Dock />
      <FileMenu />
    </div>
  );
}
